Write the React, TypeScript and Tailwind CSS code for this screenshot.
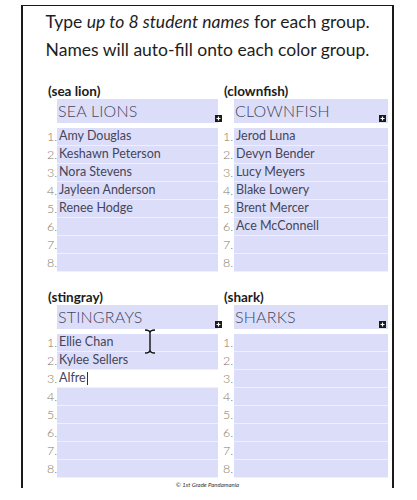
const groups = [
  {
    label: "(sea lion)",
    title: "SEA LIONS",
    names: ["Amy Douglas", "Keshawn Peterson", "Nora Stevens", "Jayleen Anderson", "Renee Hodge", "", "", ""],
  },
  {
    label: "(clownfish)",
    title: "CLOWNFISH",
    names: ["Jerod Luna", "Devyn Bender", "Lucy Meyers", "Blake Lowery", "Brent Mercer", "Ace McConnell", "", ""],
  },
  {
    label: "(stingray)",
    title: "STINGRAYS",
    names: ["Ellie Chan", "Kylee Sellers", "Alfre", "", "", "", "", ""],
    editing: 2,
  },
  {
    label: "(shark)",
    title: "SHARKS",
    names: ["", "", "", "", "", "", "", ""],
  },
];

const PlusBox = ({ wide }: { wide: boolean }) => (
  <span
    className={`absolute ${wide ? "right-[-4px]" : "right-[2px]"} bottom-[1px] flex h-[7px] w-[7px] items-center justify-center bg-[#1a1a1a]`}
  >
    <svg width="5" height="5" viewBox="0 0 5 5">
      <path d="M2.5 0.5v4M0.5 2.5h4" stroke="#fff" strokeWidth="1.2" />
    </svg>
  </span>
);

const Group = ({ g, wide }: { g: (typeof groups)[number]; wide: boolean }) => (
  <div className={wide ? "w-[171px]" : "w-[165px]"}>
    <div className="h-[14px] pl-[1px] text-[13.5px] leading-[14px] font-bold text-[#1c1c1c]">{g.label}</div>
    <div className="mt-[1px] flex">
      <div className={wide ? "w-[10px]" : "w-[11px]"} />
      <div className="relative flex h-[24px] flex-1 items-center bg-[#dcdef9] pl-[1px]">
        <span className="text-[16px] font-light tracking-[0.2px] text-[#45455c]">{g.title}</span>
        <PlusBox wide={wide} />
      </div>
    </div>
    <div className="mt-[5px] flex flex-col">
      {g.names.map((n, i) => (
        <div key={i} className="flex h-[18px]">
          <span className={`${wide ? "w-[10px]" : "w-[11px]"} text-[12.5px] leading-[18px] font-light text-[#7f7966]`}>
            {i + 1}.
          </span>
          <div
            className={`flex flex-1 items-center border-b border-[#eef0fd] pl-[2px] text-[12.5px] text-[#45455a] ${
              g.editing === i ? "bg-white" : "bg-[#dcdef9]"
            }`}
          >
            {n}
            {g.editing === i && <span className="ml-[1px] h-[13px] w-[1px] bg-[#333]" />}
          </div>
        </div>
      ))}
    </div>
  </div>
);

export default function App() {
  return (
    <div className="h-[500px] w-[417px] bg-white pt-[5px] pl-[21px]" style={{ fontFamily: "Lato, 'Noto Sans', sans-serif" }}>
      <div className="relative h-[483px] w-[373px] border-t border-r-2 border-l-2 border-[#1a1a1a]">
        <div className="pt-[2px] text-center text-[17.5px] leading-[28px] text-[#1e1e1e]">
          <div>
            Type <span className="italic">up to 8 student names</span> for each group.
          </div>
          <div>Names will auto-fill onto each color group.</div>
        </div>
        <div className="mt-[20px] flex gap-[5px] pl-[24px]">
          <Group g={groups[0]} wide />
          <Group g={groups[1]} wide={false} />
        </div>
        <div className="mt-[18px] flex gap-[5px] pl-[24px]">
          <Group g={groups[2]} wide />
          <Group g={groups[3]} wide={false} />
        </div>
        <div className="mt-[2px] text-center text-[6px] italic text-[#333]">© 1st Grade Pandamania</div>
        <svg className="absolute left-[121px] top-[323px]" width="12" height="25" viewBox="0 0 12 25">
          <path d="M1 1c3 0 5 1 5 3v17c0 2-2 3-5 3M11 1c-3 0-5 1-5 3v17c0 2 2 3 5 3" stroke="#111" strokeWidth="1.4" fill="none" />
        </svg>
      </div>
    </div>
  );
}
